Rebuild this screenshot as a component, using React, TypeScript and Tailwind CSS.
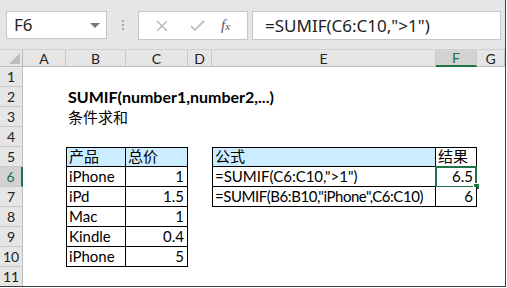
import React from 'react'

const cols = ['A', 'B', 'C', 'D', 'E', 'F', 'G']
const font = "font-['Lato','Noto_Sans_CJK_SC',sans-serif]"

type Cell = {
  text?: string
  right?: boolean
  fill?: boolean
  box?: boolean
  top?: boolean
  left?: boolean
  bold?: boolean
  tight?: boolean
  selected?: boolean
}

// row -> column index (0 = A) -> cell
const sheet: Record<number, Record<number, Cell>> = {
  2: { 1: { text: 'SUMIF(number1,number2,...)', bold: true } },
  3: { 1: { text: '条件求和' } },
  5: {
    1: { text: '产品', fill: true, box: true, top: true, left: true },
    2: { text: '总价', fill: true, box: true, top: true },
    4: { text: '公式', fill: true, box: true, top: true, left: true },
    5: { text: '结果', box: true, top: true },
  },
  6: {
    1: { text: 'iPhone', box: true, left: true },
    2: { text: '1', right: true, box: true },
    4: { text: '=SUMIF(C6:C10,">1")', box: true, left: true },
    5: { text: '6.5', right: true, box: true, selected: true },
  },
  7: {
    1: { text: 'iPd', box: true, left: true },
    2: { text: '1.5', right: true, box: true },
    4: { text: '=SUMIF(B6:B10,"iPhone",C6:C10)', box: true, left: true, tight: true },
    5: { text: '6', right: true, box: true },
  },
  8: {
    1: { text: 'Mac', box: true, left: true },
    2: { text: '1', right: true, box: true },
  },
  9: {
    1: { text: 'Kindle', box: true, left: true },
    2: { text: '0.4', right: true, box: true },
  },
  10: {
    1: { text: 'iPhone', box: true, left: true },
    2: { text: '5', right: true, box: true },
  },
}

function FormulaBar() {
  return (
    <div className="h-[50px] shrink-0 bg-[#e6e6e6] flex items-start pt-[11px] border-b border-[#d0d0d0]">
      <div className="ml-[6px] w-[101px] h-[28px] bg-white border border-[#c6c6c6] flex items-center justify-between pl-[7px] pr-[6px]">
        <span className="font-['Noto_Sans',sans-serif] text-[17px] text-[#222]">F6</span>
        <span className="w-0 h-0 border-l-[5px] border-r-[5px] border-t-[5px] border-l-transparent border-r-transparent border-t-[#777]" />
      </div>
      <div className="w-[31px] h-[28px] flex flex-col items-center justify-center gap-[2px]">
        <span className="w-[2px] h-[2px] bg-[#a8a8a8]" />
        <span className="w-[2px] h-[2px] bg-[#a8a8a8]" />
        <span className="w-[2px] h-[2px] bg-[#a8a8a8]" />
      </div>
      <div className="w-[110px] h-[29px] bg-white border border-[#c6c6c6] flex items-center">
        <svg width="36" height="16" viewBox="0 0 36 16" className="ml-[5px]">
          <path d="M13 3 L23 13 M23 3 L13 13" stroke="#b4b4b4" strokeWidth="1.4" fill="none" />
        </svg>
        <svg width="36" height="16" viewBox="0 0 36 16">
          <path d="M11 8 L15 12 L24 3" stroke="#c0c0c0" strokeWidth="1.8" fill="none" />
        </svg>
        <span className="ml-[5px] font-['Liberation_Serif',serif] italic text-[15px] text-[#555]">
          f<span className="text-[11px]">x</span>
        </span>
      </div>
      <div className="ml-[4px] w-[249px] h-[29px] bg-white border border-[#c6c6c6] flex items-center pl-[12px]">
        <span className="font-['Noto_Sans',sans-serif] text-[17px] text-[#222] whitespace-nowrap">
          =SUMIF(C6:C10,"&gt;1")
        </span>
      </div>
    </div>
  )
}

function Grid() {
  const rows = Array.from({ length: 11 }, (_, i) => i + 1)
  return (
    <div className={`grid grid-cols-[23px_43px_60px_62px_24px_224px_41px_1fr] grid-rows-[17px_repeat(11,20px)] ${font}`}>
      {/* corner */}
      <div className="bg-[#e6e6e6] border-r border-b border-[#bdbdbd] relative">
        <span className="absolute right-[2px] bottom-[2px] w-0 h-0 border-l-[11px] border-b-[11px] border-l-transparent border-b-[#bdbdbd]" />
      </div>
      {cols.map((c) => (
        <div
          key={c}
          className={`flex items-center justify-center text-[14px] border-r border-[#c8c8c8] ${
            c === 'F'
              ? 'bg-[#d2d2d2] text-[#217346] border-b-2 border-b-[#217346]'
              : 'bg-[#e6e6e6] text-[#222] border-b border-b-[#bdbdbd]'
          }`}
        >
          {c}
        </div>
      ))}
      {rows.map((r) => (
        <React.Fragment key={r}>
          <div
            className={`flex items-center justify-center text-[14px] border-b border-[#c8c8c8] ${
              r === 6
                ? 'bg-[#d2d2d2] text-[#217346] border-r-2 border-r-[#217346]'
                : 'bg-[#e6e6e6] text-[#222] border-r border-r-[#bdbdbd]'
            }`}
          >
            {r}
          </div>
          {cols.map((_, ci) => {
            const cell = sheet[r]?.[ci]
            if (!cell) return <div key={ci} className="bg-white" />
            return (
              <div
                key={ci}
                className={`relative flex items-end pb-[1px] text-black whitespace-nowrap ${
                  cell.right ? 'justify-end pr-[3px]' : 'pl-[2px]'
                } ${cell.fill ? 'bg-[#ccecff]' : 'bg-white'} ${
                  cell.box ? 'border-r border-b border-black' : ''
                } ${cell.top ? 'border-t' : ''} ${cell.left ? 'border-l' : ''} ${
                  cell.bold ? 'font-bold text-[16px] overflow-visible' : 'text-[15px]'
                } ${cell.tight ? 'tracking-[-0.45px]' : ''}`}
              >
                <span className="leading-[18px]">{cell.text}</span>
                {cell.selected && (
                  <>
                    <span className="absolute -left-[1px] -top-[1px] right-[-1px] bottom-[-2px] border-2 border-[#217346]" />
                    <span className="absolute right-[-4px] bottom-[-4px] w-[5px] h-[5px] bg-[#217346] border border-white box-content" />
                  </>
                )}
              </div>
            )
          })}
        </React.Fragment>
      ))}
    </div>
  )
}

export default function App() {
  return (
    <div className="w-[507px] h-[288px] bg-white">
      <div className="w-[506px] h-[287px] border-r border-b border-[#3a3a3a] flex flex-col overflow-hidden">
        <FormulaBar />
        <Grid />
      </div>
    </div>
  )
}
